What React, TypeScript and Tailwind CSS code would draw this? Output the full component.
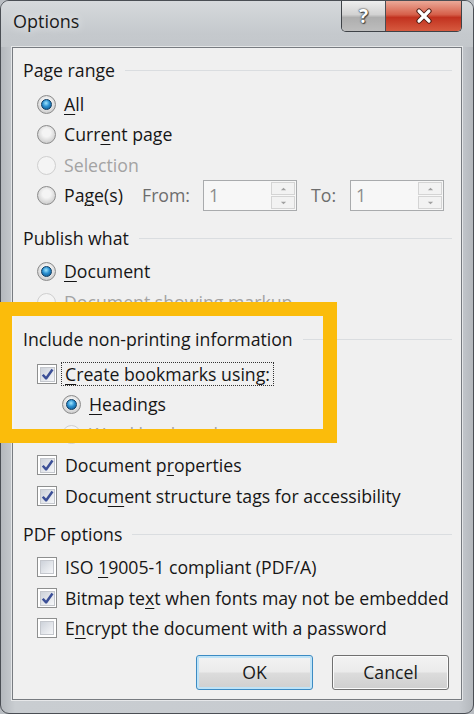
import React from "react";

const ui = "font-['Open_Sans','Noto_Sans',sans-serif]";

type LabelProps = { pre?: string; k?: string; post?: string };

function Label({ pre = "", k = "", post = "" }: LabelProps) {
  return (
    <>
      {pre}
      {k ? <span className="underline decoration-1 underline-offset-[3px]">{k}</span> : null}
      {post}
    </>
  );
}

function Radio({ checked = false, disabled = false }: { checked?: boolean; disabled?: boolean }) {
  return (
    <span
      className={`grid size-[19px] shrink-0 place-items-center rounded-full border ${
        disabled
          ? "border-[#cfcfcf] bg-[#f4f4f4]"
          : "border-[#8b8b8b] bg-[radial-gradient(circle_at_50%_40%,#f4f4f4_30%,#cfcfcf_75%,#e9e9e9)]"
      }`}
    >
      {checked ? (
        <span className="size-[11px] rounded-full border border-[#0c3b62] bg-[radial-gradient(circle_at_45%_35%,#9fe6ff,#2a8fd0_45%,#0d4f80)]" />
      ) : null}
    </span>
  );
}

function Check({ checked = false }: { checked?: boolean }) {
  return (
    <span className="grid size-[20px] shrink-0 place-items-center border border-[#8e8f8f] bg-white p-[2px]">
      <span className="grid size-full place-items-center border border-[#c4c7cd] bg-[linear-gradient(135deg,#cdd2da,#f6f7f9)]">
        {checked ? (
          <svg viewBox="0 0 12 12" className="size-[13px]">
            <path d="M1.6 6.2 L4.7 9.6 L10.6 1.4" stroke="#3b4f97" strokeWidth="2.3" fill="none" strokeLinejoin="round" />
          </svg>
        ) : null}
      </span>
    </span>
  );
}

function Heading({ children }: { children: React.ReactNode }) {
  return (
    <div className="flex h-[30px] items-center pl-[10px] pr-[9px]">
      <span className="shrink-0">{children}</span>
      <span className="ml-[10px] h-px flex-1 bg-[#dadde0]" />
    </div>
  );
}

function RadioRow({
  checked,
  disabled,
  indent = false,
  children,
}: {
  checked?: boolean;
  disabled?: boolean;
  indent?: boolean;
  children: React.ReactNode;
}) {
  return (
    <div className={`flex h-[30.5px] items-center ${indent ? "pl-[49px]" : "pl-[24px]"}`}>
      <Radio checked={checked} disabled={disabled} />
      <span className={`ml-[8px] ${disabled ? "text-[#a3a3a3]" : ""}`}>{children}</span>
    </div>
  );
}

function CheckRow({ checked, focus = false, children }: { checked?: boolean; focus?: boolean; children: React.ReactNode }) {
  return (
    <div className="flex h-[30.5px] items-center pl-[24px]">
      <Check checked={checked} />
      <span
        className={`ml-[4px] px-[3px] leading-[22px] ${
          focus ? "border border-dotted border-[#333]" : "border border-transparent"
        }`}
      >
        {children}
      </span>
    </div>
  );
}

function Spin() {
  return (
    <div className="flex h-[31px] w-[94px] shrink-0 border border-[#a9abad] bg-[#f7f7f7]">
      <span className="flex flex-1 items-center pl-[5px] text-[#8c8c8c]">1</span>
      <div className="flex w-[26px] flex-col gap-px p-px">
        {["M4 8 L8 4 L12 8 Z", "M4 4 L8 8 L12 4 Z"].map((d) => (
          <span key={d} className="grid flex-1 place-items-center border border-[#d4d4d4] bg-[#f2f2f2]">
            <svg viewBox="0 0 16 12" className="h-[8px] w-[11px]">
              <path d={d} fill="#a0a0a0" />
            </svg>
          </span>
        ))}
      </div>
    </div>
  );
}

function Button({ primary = false, children }: { primary?: boolean; children: React.ReactNode }) {
  return (
    <button
      className={`grid h-[35px] w-[117px] place-items-center rounded-[3px] border bg-[linear-gradient(180deg,#f3f3f3,#ebebeb_48%,#dcdcdc_52%,#cfcfcf)] text-[#1a1a1a] ${
        primary
          ? "border-[#3c8bc3] shadow-[inset_0_0_0_2px_#bfe3f7]"
          : "border-[#707070] shadow-[inset_0_0_0_1px_#fbfbfb]"
      }`}
    >
      {children}
    </button>
  );
}

export default function App() {
  return (
    <div className={`relative h-[714px] w-[474px] overflow-hidden bg-[#b9bdc2] text-[17.7px] text-[#161616] ${ui}`}>
      <div className="flex h-full flex-col rounded-[9px] border border-[#4a4e54] bg-[linear-gradient(90deg,#b4b8bd,#c9cdd1_3%,#c6cacf_97%,#b4b8bd)] px-[11px] pb-[13px]">
        {/* title bar */}
        <div className="-mx-[11px] flex h-[46px] items-start justify-between rounded-t-[8px] bg-[linear-gradient(180deg,#d6d9dc,#c5c9cd_70%,#c3c7cb)] px-[11px]">
          <span className="pl-[1px] pt-[7px] text-[18px] text-[#1b1b1b] [text-shadow:0_0_8px_rgba(255,255,255,0.9)]">
            Options
          </span>
          <div className="flex h-[31px] overflow-hidden rounded-b-[5px] border border-t-0 border-[#3e4247]">
            <span className="grid w-[44px] place-items-center border-r border-[#4a4e54] bg-[linear-gradient(180deg,#eeeeee,#d2d2d2_45%,#aeaeae_55%,#bdbdbd)] text-[19px] font-bold text-white [text-shadow:0_0_1px_#333,0_0_2px_#333,1px_1px_1px_#444]">
              ?
            </span>
            <span className="grid w-[75px] place-items-center bg-[linear-gradient(180deg,#eba998,#d6604a_45%,#c2321f_55%,#d65a3f)]">
              <svg viewBox="0 0 20 16" className="h-[16px] w-[20px]">
                <path d="M5 3 L15 13 M15 3 L5 13" stroke="#4a1a12" strokeWidth="5.2" strokeLinecap="round" />
                <path d="M5 3 L15 13 M15 3 L5 13" stroke="#ffffff" strokeWidth="3.2" strokeLinecap="round" />
              </svg>
            </span>
          </div>
        </div>

        {/* client */}
        <div className="flex flex-1 flex-col border border-[#777b80] bg-[#f0f0f0] pt-[7px] shadow-[0_0_0_1px_rgba(255,255,255,0.55)]">
          <Heading>Page range</Heading>
          <div className="mt-[4px]" />
          <RadioRow checked>
            <Label k="A" post="ll" />
          </RadioRow>
          <RadioRow>
            <Label pre="Curr" k="e" post="nt page" />
          </RadioRow>
          <RadioRow disabled>Selection</RadioRow>
          <div className="flex h-[30.5px] items-center pl-[24px]">
            <Radio />
            <span className="ml-[8px] w-[78px] shrink-0">
              <Label pre="Pa" k="g" post="e(s)" />
            </span>
            <span className="w-[61px] shrink-0 text-[#6d6d6d]">From:</span>
            <Spin />
            <span className="ml-[14px] w-[39px] shrink-0 text-[#6d6d6d]">To:</span>
            <Spin />
          </div>

          <div className="mt-[12.5px]" />
          <Heading>Publish what</Heading>
          <div className="mt-[3px]" />
          <RadioRow checked>
            <Label k="D" post="ocument" />
          </RadioRow>
          <RadioRow disabled>Document showing markup</RadioRow>

          <div className="mt-[7px]" />
          <Heading>Include non-printing information</Heading>
          <div className="mt-[4px]" />
          <CheckRow checked focus>
            <Label k="C" post="reate bookmarks using:" />
          </CheckRow>
          <RadioRow checked indent>
            <Label k="H" post="eadings" />
          </RadioRow>
          <RadioRow disabled indent>
            Word bookmarks
          </RadioRow>
          <CheckRow checked>
            <Label pre="Document p" k="r" post="operties" />
          </CheckRow>
          <CheckRow checked>
            <Label pre="Docu" k="m" post="ent structure tags for accessibility" />
          </CheckRow>

          <div className="mt-[8px]" />
          <Heading>PDF options</Heading>
          <div className="mt-[3px]" />
          <CheckRow>
            <Label pre="ISO " k="1" post="9005-1 compliant (PDF/A)" />
          </CheckRow>
          <CheckRow checked>
            <Label pre="Bitmap te" k="x" post="t when fonts may not be embedded" />
          </CheckRow>
          <CheckRow>
            <Label pre="E" k="n" post="crypt the document with a password" />
          </CheckRow>

          <div className="mt-[11px] flex justify-end gap-[19px] pr-[12px]">
            <Button primary>OK</Button>
            <Button>Cancel</Button>
          </div>
        </div>
      </div>

      {/* highlight callout */}
      <div className="absolute left-[-2px] top-[302px] h-[141px] w-[339px] border-[14px] border-[#fbbc0b]">
        <div className="h-full border-l-2 border-[#f3f3f3]" />
      </div>
    </div>
  );
}
